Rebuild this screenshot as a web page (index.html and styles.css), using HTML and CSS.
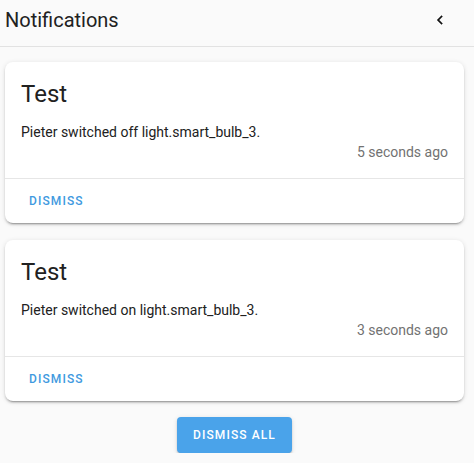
FILE: index.html
```html
<!DOCTYPE html>
<html>
<head>
    <meta charset="UTF-8">
    <meta name="viewport" content="width=device-width, initial-scale=1.0">
    <title>Notifications</title>
    <link rel="stylesheet" href="styles.css">
</head>
<body>
    <div class="header">
        <div class="title">Notifications</div>
        <svg class="close-icon" viewBox="0 0 24 24" width="18" height="18">
            <path d="M15.41,16.58L10.83,12L15.41,7.41L14,6L8,12L14,18L15.41,16.58Z"/>
        </svg>
    </div>

    <div class="list">
        <div class="card">
            <div class="card-title">Test</div>
            <div class="card-content">
                <div class="message">Pieter switched off light.smart_bulb_3.</div>
                <div class="time">5 seconds ago</div>
            </div>
            <div class="card-actions">
                <button class="text-button">Dismiss</button>
            </div>
        </div>

        <div class="card">
            <div class="card-title">Test</div>
            <div class="card-content">
                <div class="message">Pieter switched on light.smart_bulb_3.</div>
                <div class="time">3 seconds ago</div>
            </div>
            <div class="card-actions">
                <button class="text-button">Dismiss</button>
            </div>
        </div>

        <div class="footer">
            <button class="raised-button">Dismiss all</button>
        </div>
    </div>
</body>
</html>
```

FILE: styles.css
```css
body {
    margin: 0;
    font-family: Roboto, "Noto Sans", sans-serif;
    background-color: #fafafa;
    color: #212121;
}
.header {
    display: flex;
    align-items: center;
    justify-content: space-between;
    height: 39px;
    padding: 0 25px 7px 5px;
    border-bottom: 1px solid #e2e2e2;
}
.title {
    font-size: 20px;
    line-height: 24px;
}
.close-icon {
    fill: #111111;
    stroke: #111111;
    stroke-width: 0.4;
}
.list {
    padding: 15px 10px 0 5px;
}
.card {
    background-color: #ffffff;
    border-radius: 8px;
    margin-bottom: 17px;
    box-shadow: 0 2px 2px rgba(0, 0, 0, 0.14), 0 1px 5px rgba(0, 0, 0, 0.12), 0 3px 1px -2px rgba(0, 0, 0, 0.2);
}
.card-title {
    font-size: 24px;
    line-height: 32px;
    padding: 16px 16px 0;
}
.card-content {
    font-size: 14px;
    line-height: 20px;
    padding: 12px 16px 16px;
}
.time {
    text-align: right;
    color: #727272;
}
.card-actions {
    border-top: 1px solid #e6e6e6;
    height: 44px;
    display: flex;
    align-items: center;
    padding: 0 16px;
}
.text-button {
    background: none;
    border: none;
    font-family: inherit;
    font-size: 12px;
    font-weight: 500;
    letter-spacing: 1.1px;
    text-transform: uppercase;
    color: #3f9ae0;
    padding: 8px;
    cursor: pointer;
}
.footer {
    display: flex;
    justify-content: center;
    margin-top: -1px;
}
.raised-button {
    background-color: #4aa3ea;
    color: #ffffff;
    border: none;
    border-radius: 4px;
    height: 36px;
    padding: 0 16px;
    font-family: inherit;
    font-size: 12px;
    font-weight: 500;
    letter-spacing: 1.1px;
    text-transform: uppercase;
    box-shadow: 0 2px 2px rgba(0, 0, 0, 0.14), 0 1px 5px rgba(0, 0, 0, 0.12), 0 3px 1px -2px rgba(0, 0, 0, 0.2);
    cursor: pointer;
}
```
